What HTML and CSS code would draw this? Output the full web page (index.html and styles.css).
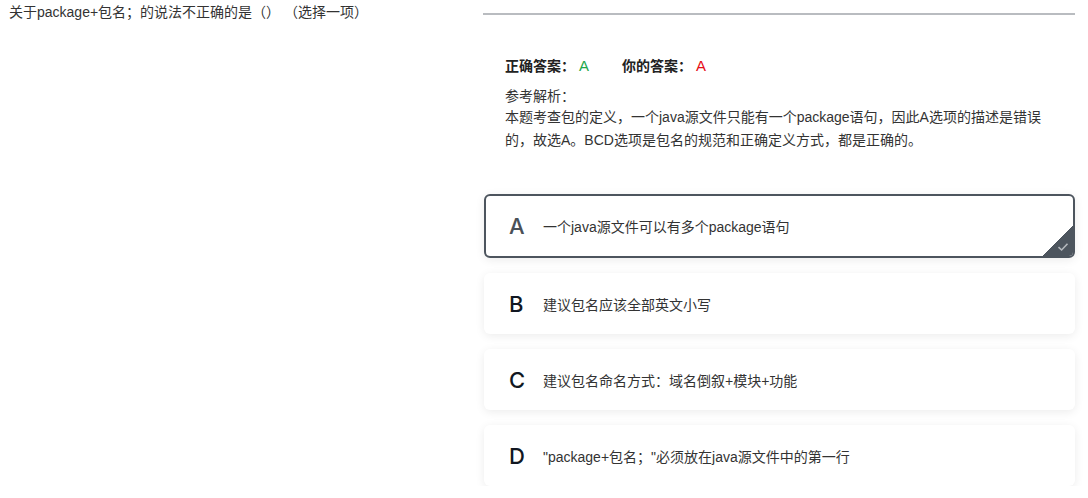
FILE: index.html
```html
<!DOCTYPE html>
<html lang="zh-CN">
<head>
  <meta charset="UTF-8" />
  <title>选择题解析</title>
  <link rel="stylesheet" href="styles.css">
</head>
<body>
  <div class="page">
    <div class="question">
      <p class="stem">关于package+包名；的说法不正确的是（）&nbsp;（选择一项）</p>
    </div>
    <div class="answer-panel">
      <div class="analysis">
        <div class="result">
          <span class="label">正确答案：</span><span class="right">A</span>
          <span class="label mine">你的答案：</span><span class="wrong">A</span>
        </div>
        <div class="explain-title">参考解析：</div>
        <div class="explain">本题考查包的定义，一个java源文件只能有一个package语句，因此A选项的描述是错误的，故选A。BCD选项是包名的规范和正确定义方式，都是正确的。</div>
      </div>
      <div class="options">
        <div class="option selected">
          <span class="letter">A</span>
          <span class="text">一个java源文件可以有多个package语句</span>
          <span class="corner">
            <svg width="12" height="10" viewBox="0 0 12 10"><path d="M1.5 5.2 L4.6 8 L10.5 1.8" fill="none" stroke="#b4b8bd" stroke-width="1.6"/></svg>
          </span>
        </div>
        <div class="option">
          <span class="letter">B</span>
          <span class="text">建议包名应该全部英文小写</span>
        </div>
        <div class="option">
          <span class="letter">C</span>
          <span class="text">建议包名命名方式：域名倒叙+模块+功能</span>
        </div>
        <div class="option">
          <span class="letter">D</span>
          <span class="text">"package+包名；"必须放在java源文件中的第一行</span>
        </div>
      </div>
    </div>
  </div>
</body>
</html>
```

FILE: styles.css
```css
body {
  margin: 0;
  padding: 0;
  font-family: "Liberation Sans", "Noto Sans CJK SC", sans-serif;
  font-size: 14px;
  color: #333;
  background: #fff;
}

.page {
  display: flex;
  width: 1088px;
}

.question {
  width: 483px;
  flex-shrink: 0;
}

.stem {
  margin: 0;
  padding: 2px 9px;
  line-height: 20px;
  color: #333;
}

.answer-panel {
  width: 592px;
  margin-top: 13px;
  border-top: 2px solid #b9bcc0;
}

.analysis {
  padding: 41px 22px 0;
}

.result {
  line-height: 20px;
  font-weight: bold;
  color: #222;
}

.result .right {
  color: #1ea84a;
  font-weight: normal;
  font-size: 15px;
  margin-left: 4px;
}

.result .mine {
  margin-left: 29px;
}

.result .wrong {
  color: #e60d16;
  font-weight: normal;
  font-size: 15px;
  margin-left: 4px;
}

.explain-title {
  margin-top: 10px;
  line-height: 20px;
}

.explain {
  line-height: 23px;
  padding-right: 2px;
}

.options {
  margin-top: 42px;
  display: flex;
  flex-direction: column;
  gap: 15px;
  padding-left: 1px;
}

.option {
  position: relative;
  height: 61px;
  box-sizing: border-box;
  display: flex;
  align-items: center;
  padding-left: 25px;
  background: #fff;
  border-radius: 6px;
  box-shadow: 0 2px 10px rgba(0, 0, 0, 0.08);
  overflow: hidden;
}

.option.selected {
  height: 64px;
  border: 2px solid #4d555e;
  padding-left: 23px;
}

.letter {
  width: 34px;
  font-family: Inter, "Liberation Sans", sans-serif;
  font-weight: 500;
  font-size: 22px;
  color: #111722;
}

.selected .letter {
  color: #4a5058;
}

.text {
  font-size: 14px;
  color: #333;
}

.corner {
  position: absolute;
  right: 0;
  bottom: 0;
  width: 30px;
  height: 30px;
  background: linear-gradient(135deg, transparent 50%, #4d555e 50%);
}

.corner svg {
  position: absolute;
  right: 4px;
  bottom: 4px;
}
```
